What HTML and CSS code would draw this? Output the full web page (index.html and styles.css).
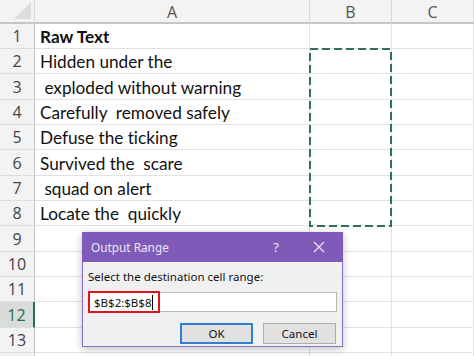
FILE: index.html
```html
<!DOCTYPE html>
<html>
<head>
<meta charset="utf-8">
<link rel="stylesheet" href="styles.css">
</head>
<body>
<div class="sheet">
  <div class="corner"><span class="tri"></span></div>
  <div class="colhead">A</div>
  <div class="colhead">B</div>
  <div class="colhead">C</div>

  <div class="rowhead">1</div><div class="cell bold">Raw Text</div><div class="cell"></div><div class="cell"></div>
  <div class="rowhead">2</div><div class="cell">Hidden under the</div><div class="cell"></div><div class="cell"></div>
  <div class="rowhead">3</div><div class="cell">&nbsp;exploded without warning</div><div class="cell"></div><div class="cell"></div>
  <div class="rowhead">4</div><div class="cell">Carefully&nbsp; removed safely</div><div class="cell"></div><div class="cell"></div>
  <div class="rowhead">5</div><div class="cell">Defuse the ticking</div><div class="cell"></div><div class="cell"></div>
  <div class="rowhead">6</div><div class="cell">Survived the&nbsp; scare</div><div class="cell"></div><div class="cell"></div>
  <div class="rowhead">7</div><div class="cell">&nbsp;squad on alert</div><div class="cell"></div><div class="cell"></div>
  <div class="rowhead">8</div><div class="cell">Locate the&nbsp; quickly</div><div class="cell"></div><div class="cell"></div>
  <div class="rowhead">9</div><div class="cell"></div><div class="cell"></div><div class="cell"></div>
  <div class="rowhead">10</div><div class="cell"></div><div class="cell"></div><div class="cell"></div>
  <div class="rowhead">11</div><div class="cell"></div><div class="cell"></div><div class="cell"></div>
  <div class="rowhead active">12</div><div class="cell"></div><div class="cell"></div><div class="cell"></div>
  <div class="rowhead">13</div><div class="cell"></div><div class="cell"></div><div class="cell"></div>
  <div class="rowhead"></div><div class="cell"></div><div class="cell"></div><div class="cell"></div>

  <svg class="ants" width="83" height="179" viewBox="0 0 83 179">
    <rect x="1" y="1" width="81" height="177" fill="none" stroke="#2e7352" stroke-width="2" stroke-dasharray="8 4"/>
  </svg>

  <div class="dialog">
    <div class="titlebar">
      <span class="title">Output Range</span>
      <span class="help">?</span>
      <span class="close">
        <svg width="12" height="12" viewBox="0 0 12 12"><path d="M1 1 L11 11 M11 1 L1 11" stroke="#e6def2" stroke-width="1.4" fill="none"/></svg>
      </span>
    </div>
    <div class="dbody">
      <div class="label">Select the destination cell range:</div>
      <div class="input">
        <div class="refbox">$B$2:$B$8<span class="caret"></span></div>
      </div>
      <div class="buttons">
        <div class="btn default">OK</div>
        <div class="btn">Cancel</div>
      </div>
    </div>
  </div>
</div>
</body>
</html>
```
FILE: styles.css
```css
html, body {
  margin: 0;
  padding: 0;
  background: #ffffff;
}
.sheet {
  position: relative;
  width: 474px;
  height: 356px;
  overflow: hidden;
  display: grid;
  grid-template-columns: 35px 275px 82px 82px;
  grid-template-rows: 24px 25px 25px 26px 25px 25px 26px 25px 25px 26px 25px 25px 26px 25px 10px;
  font-family: Lato, "Liberation Sans", sans-serif;
  font-variant-ligatures: none;
}
.corner {
  position: relative;
  background: #f3f3f3;
  border-right: 1px solid #d8d8d8;
  border-bottom: 2px solid #c6c6c6;
  box-sizing: border-box;
}
.tri {
  position: absolute;
  right: 3px;
  bottom: 3px;
  width: 0;
  height: 0;
  border-left: 17px solid transparent;
  border-bottom: 17px solid #dcdcdc;
}
.colhead {
  background: #f3f3f3;
  border-right: 1px solid #dadada;
  border-bottom: 2px solid #c6c6c6;
  box-sizing: border-box;
  display: flex;
  align-items: center;
  justify-content: center;
  color: #555555;
  font-family: "Open Sans", "Liberation Sans", sans-serif;
  font-size: 16px;
  padding-top: 1px;
}
.rowhead {
  background: #f3f3f3;
  border-right: 1px solid #c6c6c6;
  border-bottom: 1px solid #dedede;
  box-sizing: border-box;
  display: flex;
  align-items: center;
  justify-content: center;
  color: #444444;
  font-family: "Open Sans", "Liberation Sans", sans-serif;
  font-size: 16px;
}
.rowhead.active {
  background: #d9dcda;
  color: #217346;
  border-right: 2px solid #217346;
}
.cell {
  border-right: 1px solid #e1e1e1;
  border-bottom: 1px solid #e1e1e1;
  box-sizing: border-box;
  display: flex;
  align-items: center;
  padding-left: 5px;
  padding-top: 1px;
  font-size: 17.2px;
  color: #111111;
  white-space: pre;
}
.bold {
  font-weight: 700;
}
.ants {
  position: absolute;
  left: 309px;
  top: 48px;
}
.dialog {
  position: absolute;
  left: 82px;
  top: 232px;
  width: 261px;
  height: 115px;
  box-sizing: border-box;
  border: 1px solid #8a6cc0;
  background: #f0f0f0;
  box-shadow: 0 2px 8px rgba(0, 0, 0, 0.25);
  display: flex;
  flex-direction: column;
  font-family: "Noto Sans", "Liberation Sans", sans-serif;
}
.titlebar {
  height: 30px;
  background: #7f5bb9;
  display: flex;
  align-items: center;
  color: #ece6f5;
  flex-shrink: 0;
  margin: -1px -1px 0 -1px;
}
.title {
  font-size: 11.8px;
  padding-left: 9px;
  flex: 1;
}
.help {
  font-size: 13px;
  width: 14px;
  text-align: center;
  margin-right: 30px;
}
.close {
  display: flex;
  width: 12px;
  margin-right: 18px;
}
.dbody {
  padding: 7px 5px 0 5px;
  display: flex;
  flex-direction: column;
}
.label {
  font-size: 11.5px;
  color: #111111;
  height: 15px;
  line-height: 15px;
  white-space: nowrap;
}
.input {
  margin-top: 8px;
  height: 20px;
  background: #ffffff;
  border: 1px solid #b8b8b8;
  box-sizing: border-box;
  position: relative;
}
.refbox {
  position: absolute;
  left: -1px;
  top: -2px;
  width: 72px;
  height: 22px;
  box-sizing: border-box;
  border: 2px solid #e0141e;
  font-size: 11.5px;
  color: #111111;
  padding-left: 4px;
  display: flex;
  align-items: center;
}
.caret {
  display: inline-block;
  width: 1px;
  height: 15px;
  background: #000;
}
.buttons {
  display: flex;
  justify-content: flex-end;
  gap: 10px;
  margin-top: 11px;
  padding-right: 1px;
}
.btn {
  width: 73px;
  height: 21px;
  box-sizing: border-box;
  background: #e1e1e1;
  border: 1px solid #adadad;
  font-size: 11.5px;
  color: #111;
  display: flex;
  align-items: center;
  justify-content: center;
}
.btn.default {
  border: 2px solid #2f7fd0;
}
```
